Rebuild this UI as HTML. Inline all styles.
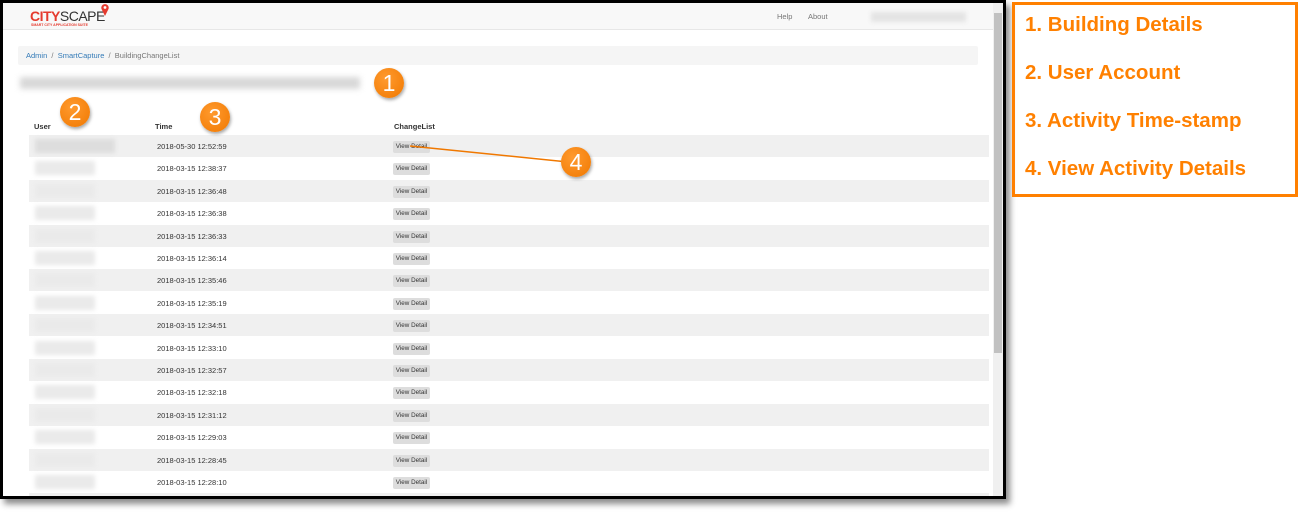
<!DOCTYPE html>
<html><head><style>
*{margin:0;padding:0;box-sizing:border-box}
body{width:1300px;height:515px;background:#fff;position:relative;overflow:hidden;font-family:"Liberation Sans",Arial,sans-serif}
.frame{position:absolute;left:0;top:0;width:1006px;height:499px;border:3px solid #000;background:#fff;box-shadow:4px 5px 6px rgba(0,0,0,.45);overflow:hidden}
.nav{position:absolute;left:0;top:0;width:990px;height:27px;background:#f8f8f8;border-bottom:1px solid #e7e7e7}
.abs{position:absolute}
.sb{position:absolute;left:990px;top:0;width:10px;height:496px;background:#f0f0f0}
.thumb{position:absolute;left:991px;top:10px;width:8px;height:340px;background:#c1c1c1}
.row{position:absolute;left:26px;width:960px;height:22px;font-size:7.5px;color:#333}
.row.g{background:#f0f0f0}
.row .t{position:absolute;left:128px;top:7px}
.row .b{position:absolute;left:364px;top:6px;width:37px;height:12px;background:#ddd;border-radius:2px;font-size:6.3px;color:#333;text-align:center;line-height:12px}
.row .u{position:absolute;left:6px;top:4px;width:60px;height:14px;background:#eaeaea;filter:blur(2px)}
.circ{position:absolute;width:30px;height:30px;border-radius:50%;background:radial-gradient(circle at 40% 35%,#ff9a2e,#f07800);color:#fff;font-size:23px;text-align:center;line-height:30px;box-shadow:1px 2px 3px rgba(0,0,0,.35)}
.legend{position:absolute;left:1012px;top:2px;width:286px;height:195px;border:3px solid #ff8000}
.legend div{position:absolute;left:10px;color:#ff8000;font-weight:bold;font-size:20.5px}
</style></head><body>
<div class="frame">
 <div class="nav">
  <div class="abs" style="left:27px;top:5px;font-size:14px;font-weight:bold;color:#e53a2e;letter-spacing:-0.5px">CITY<span style="font-weight:normal;color:#333">SCAPE</span></div>
  <div class="abs" style="left:28px;top:20px;font-size:3.5px;color:#e53a2e;font-weight:bold">SMART CITY APPLICATION SUITE</div>
  <svg class="abs" style="left:97px;top:0" width="10" height="14"><path d="M5 13 L1.5 6 A3.7 3.7 0 1 1 8.5 6 Z" fill="#e53a2e"/><circle cx="5" cy="4.5" r="1.4" fill="#fff"/></svg>
  <div class="abs" style="left:774px;top:9px;font-size:7.5px;color:#777">Help</div>
  <div class="abs" style="left:805px;top:9px;font-size:7.5px;color:#777">About</div>
  <div class="abs" style="left:868px;top:9px;width:95px;height:10px;background:#e4e4e4;filter:blur(2px)"></div>
 </div>
 <div class="abs" style="left:15px;top:43px;width:960px;height:19px;background:#f5f5f5;border-radius:2px;font-size:7.5px;line-height:19px;padding-left:8px;color:#777"><span style="color:#337ab7">Admin</span> &nbsp;/&nbsp; <span style="color:#337ab7">SmartCapture</span> &nbsp;/&nbsp; BuildingChangeList</div>
 <div class="abs" style="left:17px;top:74px;width:340px;height:12px;background:#d8d8d8;filter:blur(3px)"></div>
 <div class="abs" style="left:31px;top:119px;font-size:7.5px;font-weight:bold;color:#333">User</div>
 <div class="abs" style="left:152px;top:119px;font-size:7.5px;font-weight:bold;color:#333">Time</div>
 <div class="abs" style="left:391px;top:119px;font-size:7.5px;font-weight:bold;color:#333">ChangeList</div>
 <div class="row g" style="top:132px"><div class="u" style="width:80px;background:#ddd"></div><span class="t">2018-05-30 12:52:59</span><span class="b">View Detail</span></div>
 <div class="row" style="top:154px"><div class="u"></div><span class="t">2018-03-15 12:38:37</span><span class="b">View Detail</span></div>
 <div class="row g" style="top:177px"><div class="u"></div><span class="t">2018-03-15 12:36:48</span><span class="b">View Detail</span></div>
 <div class="row" style="top:199px"><div class="u"></div><span class="t">2018-03-15 12:36:38</span><span class="b">View Detail</span></div>
 <div class="row g" style="top:222px"><div class="u"></div><span class="t">2018-03-15 12:36:33</span><span class="b">View Detail</span></div>
 <div class="row" style="top:244px"><div class="u"></div><span class="t">2018-03-15 12:36:14</span><span class="b">View Detail</span></div>
 <div class="row g" style="top:266px"><div class="u"></div><span class="t">2018-03-15 12:35:46</span><span class="b">View Detail</span></div>
 <div class="row" style="top:289px"><div class="u"></div><span class="t">2018-03-15 12:35:19</span><span class="b">View Detail</span></div>
 <div class="row g" style="top:311px"><div class="u"></div><span class="t">2018-03-15 12:34:51</span><span class="b">View Detail</span></div>
 <div class="row" style="top:334px"><div class="u"></div><span class="t">2018-03-15 12:33:10</span><span class="b">View Detail</span></div>
 <div class="row g" style="top:356px"><div class="u"></div><span class="t">2018-03-15 12:32:57</span><span class="b">View Detail</span></div>
 <div class="row" style="top:378px"><div class="u"></div><span class="t">2018-03-15 12:32:18</span><span class="b">View Detail</span></div>
 <div class="row g" style="top:401px"><div class="u"></div><span class="t">2018-03-15 12:31:12</span><span class="b">View Detail</span></div>
 <div class="row" style="top:423px"><div class="u"></div><span class="t">2018-03-15 12:29:03</span><span class="b">View Detail</span></div>
 <div class="row g" style="top:446px"><div class="u"></div><span class="t">2018-03-15 12:28:45</span><span class="b">View Detail</span></div>
 <div class="row" style="top:468px"><div class="u"></div><span class="t">2018-03-15 12:28:10</span><span class="b">View Detail</span></div>
 <div class="row g" style="top:490px"></div>
 <div class="sb"></div><div class="thumb"></div>
 <svg class="abs" style="left:0;top:0" width="1000" height="496"><line x1="407" y1="143" x2="565" y2="159" stroke="#f07800" stroke-width="1.5"/></svg>
 <div class="circ" style="left:371px;top:65px">1</div>
 <div class="circ" style="left:57px;top:94px">2</div>
 <div class="circ" style="left:197px;top:99px">3</div>
 <div class="circ" style="left:558px;top:144px">4</div>
</div>
<div class="legend">
 <div style="top:8px">1. Building Details</div>
 <div style="top:56px">2. User Account</div>
 <div style="top:104px">3. Activity Time-stamp</div>
 <div style="top:152px">4. View Activity Details</div>
</div>
</body></html>
